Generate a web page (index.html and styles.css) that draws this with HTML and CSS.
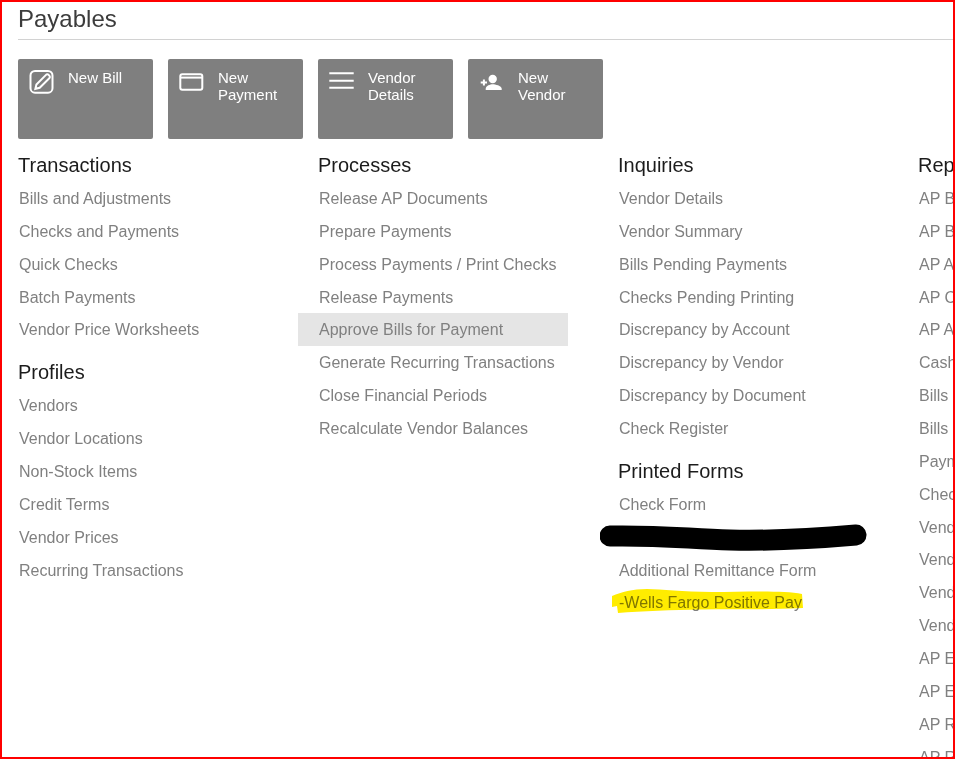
FILE: index.html
```html
<!DOCTYPE html>
<html lang="en">
<head>
<meta charset="utf-8">
<title>Payables</title>
<link rel="stylesheet" href="styles.css">
</head>
<body>
<div class="frame">
  <header class="title-bar"><h1 class="title">Payables</h1></header>
  <nav class="tiles">
    <a class="tile">
      <svg class="tile-icon" viewBox="0 0 26 26"><rect x="2.500" y="2" width="22" height="21.700" rx="4.500" class="line"/><path d="M7.400 19.800l1-4.300L18 5.900a1.800 1.800 0 0 1 2.600 0l.7.700a1.800 1.800 0 0 1 0 2.600L11.700 18.800z" class="line"/></svg>
      <span class="tile-label">New Bill</span>
    </a>
    <a class="tile">
      <svg class="tile-icon" viewBox="0 0 26 26"><rect x="2.300" y="5.300" width="22" height="15.400" rx="2" class="line"/><path d="M2.300 8.600h22" class="line"/></svg>
      <span class="tile-label">New<br>Payment</span>
    </a>
    <a class="tile">
      <svg class="tile-icon" viewBox="0 0 26 26"><path d="M1.300 4.300h24.400M1.300 11.700h24.400M1.300 18.700h24.400" class="line"/></svg>
      <span class="tile-label">Vendor<br>Details</span>
    </a>
    <a class="tile">
      <svg class="tile-icon" viewBox="0 0 26 26"><path d="M2.700 13.500h6.300M5.900 10.500v6" class="line"/><circle cx="14.700" cy="10" r="4.200" class="solid"/><path d="M7.700 21v-1.300c0-2.900 4.700-4.400 7-4.400s9 1.500 9 4.400V21z" class="solid"/></svg>
      <span class="tile-label">New<br>Vendor</span>
    </a>
  </nav>
  <main class="columns">
    <section class="column">
      <h2 class="group-title">Transactions</h2>
      <ul class="links">
        <li>Bills and Adjustments</li><li>Checks and Payments</li><li>Quick Checks</li><li>Batch Payments</li><li>Vendor Price Worksheets</li>
      </ul>
      <h2 class="group-title">Profiles</h2>
      <ul class="links">
        <li>Vendors</li><li>Vendor Locations</li><li>Non-Stock Items</li><li>Credit Terms</li><li>Vendor Prices</li><li>Recurring Transactions</li>
      </ul>
    </section>
    <section class="column">
      <h2 class="group-title">Processes</h2>
      <ul class="links">
        <li>Release AP Documents</li><li>Prepare Payments</li><li>Process Payments / Print Checks</li><li>Release Payments</li><li class="active">Approve Bills for Payment</li><li>Generate Recurring Transactions</li><li>Close Financial Periods</li><li>Recalculate Vendor Balances</li>
      </ul>
    </section>
    <section class="column">
      <h2 class="group-title">Inquiries</h2>
      <ul class="links">
        <li>Vendor Details</li><li>Vendor Summary</li><li>Bills Pending Payments</li><li>Checks Pending Printing</li><li>Discrepancy by Account</li><li>Discrepancy by Vendor</li><li>Discrepancy by Document</li><li>Check Register</li>
      </ul>
      <h2 class="group-title">Printed Forms</h2>
      <ul class="links">
        <li>Check Form</li>
        <li class="redacted">&nbsp;<svg class="scribble" viewBox="0 0 268 30"><path d="M10 15C60 14 90 18 130 19S210 18 256 14" class="scribble-line"/></svg></li>
        <li>Additional Remittance Form</li>
        <li class="marked">-Wells Fargo Positive Pay<svg class="marker" viewBox="0 0 194 26"><path d="M0 8C10 4 20 1 35 1S70 4 100 4S170 2 190 6L191 20C150 22 120 21 90 21.500S30 23 6 25L5 18L0 19z" class="marker-fill"/></svg></li>
      </ul>
    </section>
    <section class="column">
      <h2 class="group-title">Reports</h2>
      <ul class="links">
        <li>AP Balance by Vendor</li><li>AP Balance by Account</li><li>AP Aging</li><li>AP Check Register</li><li>AP Aged Past Due</li><li>Cash Requirement</li><li>Bills by Vendor</li><li>Bills by Account</li><li>Payment Register</li><li>Check Register</li><li>Vendor Balance Summary</li><li>Vendor Details</li><li>Vendor History</li><li>Vendor Statement</li><li>AP Edit Report</li><li>AP Edit Detail</li><li>AP Register</li><li>AP Retainage</li>
      </ul>
    </section>
  </main>
</div>
</body>
</html>
```
FILE: styles.css
```css
* { box-sizing: border-box; }
html, body { margin: 0; height: 100%; }
body { font-family: "Liberation Sans", Arial, sans-serif; background: #fff; }
.frame {
  width: 955px; height: 759px; overflow: hidden;
  border: 2px solid #f00; padding: 0 0 0 16px;
}
.title-bar { border-bottom: 1px solid #d2d2d2; height: 38px; margin-bottom: 19px; margin-right: -2px; }
.title { margin: 0; font-weight: 400; font-size: 24px; line-height: 34px; color: #3c3c3c; }
.tiles { display: flex; gap: 15px; }
.tile {
  width: 135px; height: 80px; flex: none; background: #7f7f7f; border-radius: 2px;
  color: #fff; display: flex; padding: 10px 0 0 10px; font-size: 15px; line-height: 17px;
}
.tile-icon { width: 26px; height: 26px; flex: none; margin-right: 14px; }
.line { fill: none; stroke: #fff; stroke-width: 2; }
.solid { fill: #fff; }
.columns { display: flex; margin-top: 14px; }
.column { width: 300px; flex: none; }
.group-title { margin: 0; font-weight: 400; font-size: 20px; line-height: 24px; color: #1c1c1c; }
.links { list-style: none; margin: 5px 0 14px -20px; padding: 0; width: 270px; }
.links li {
  position: relative; padding-left: 21px; font-size: 16px; height: 32.86px; line-height: 33.6px;
  color: #808080; white-space: nowrap;
}
.links li.active { background: #e5e5e5; }
.scribble { position: absolute; left: 2px; top: 0; width: 268px; height: 30px; }
.scribble-line { fill: none; stroke: #000; stroke-width: 21; stroke-linecap: round; }
.marker { position: absolute; left: 14px; top: 2px; width: 194px; height: 26px; mix-blend-mode: multiply; }
.marker-fill { fill: #ffec00; }
```
